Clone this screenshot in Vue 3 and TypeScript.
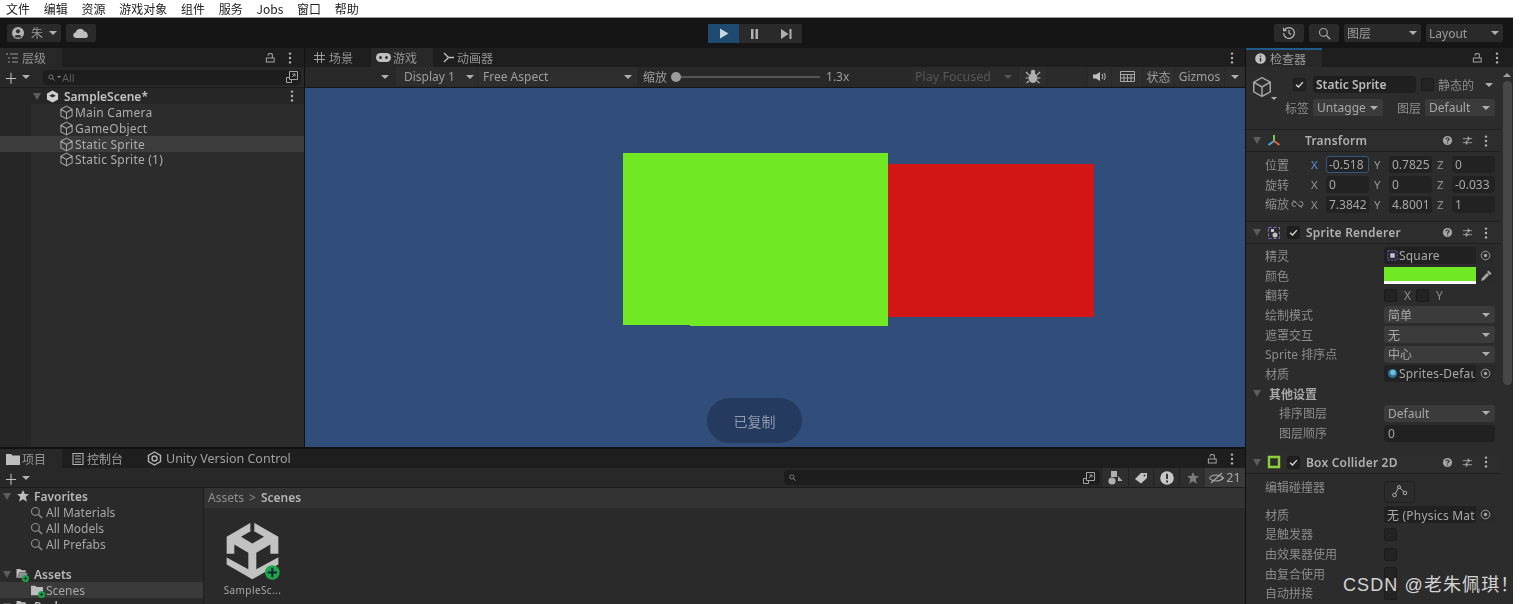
<script setup lang="ts">
const menus = ['文件', '编辑', '资源', '游戏对象', '组件', '服务', 'Jobs', '窗口', '帮助']
const hierarchy = ['Main Camera', 'GameObject', 'Static Sprite', 'Static Sprite (1)']
const transform = [
  { label: '位置', x: '-0.518', y: '0.7825', z: '0', focus: true },
  { label: '旋转', x: '0', y: '0', z: '-0.033', focus: false },
  { label: '缩放', x: '7.3842', y: '4.8001', z: '1', focus: false, link: true },
]
const rendererDrops = [
  { label: '绘制模式', value: '简单' },
  { label: '遮罩交互', value: '无' },
  { label: 'Sprite 排序点', value: '中心' },
]
const colliderChecks = ['是触发器', '由效果器使用', '由复合使用', '自动拼接']
const favorites = ['All Materials', 'All Models', 'All Prefabs']
</script>

<template>
  <div class="page">
    <svg class="defs" aria-hidden="true">
      <symbol id="cube" viewBox="0 0 16 16">
        <path d="M8 1.2 14 4.5V11.5L8 14.8 2 11.5V4.5ZM2 4.5 8 8 14 4.5M8 8V14.8" fill="none" stroke="currentColor" stroke-width="1.1" stroke-linejoin="round" />
      </symbol>
      <symbol id="kebab" viewBox="0 0 4 12">
        <circle cx="2" cy="1.6" r="1.2" fill="currentColor" /><circle cx="2" cy="6" r="1.2" fill="currentColor" /><circle cx="2" cy="10.4" r="1.2" fill="currentColor" />
      </symbol>
      <symbol id="lock" viewBox="0 0 12 12">
        <path d="M1.5 6.5H10V11H1.5ZM3.5 4V2.8C3.5 1.4 8 1.4 8 2.8V6" fill="none" stroke="currentColor" stroke-width="1.1" />
      </symbol>
      <symbol id="help" viewBox="0 0 12 12">
        <circle cx="6" cy="6" r="5" fill="currentColor" />
        <path d="M4.3 4.6C4.4 2.8 7.8 2.9 7.7 4.7 7.7 5.9 6 5.8 6 7.1M6 8.2V9.4" fill="none" stroke="#2c2c2c" stroke-width="1.3" />
      </symbol>
      <symbol id="sliders" viewBox="0 0 12 12">
        <path d="M1 4H11M1 8.4H11" stroke="currentColor" stroke-width="1" /><path d="M7 2V6M5 6.4V10.4" stroke="currentColor" stroke-width="1.8" />
      </symbol>
      <symbol id="target" viewBox="0 0 12 12">
        <circle cx="6" cy="6" r="4.7" fill="none" stroke="currentColor" stroke-width="1" /><circle cx="6" cy="6" r="1.8" fill="currentColor" />
      </symbol>
      <symbol id="check" viewBox="0 0 12 12">
        <path d="M2.3 6.3 4.9 8.8 9.7 3.4" fill="none" stroke="#d8d8d8" stroke-width="1.5" />
      </symbol>
      <symbol id="mag" viewBox="0 0 12 12">
        <circle cx="5" cy="5" r="3.6" fill="none" stroke="currentColor" stroke-width="1.1" /><path d="M7.6 7.6 11.3 11.3" stroke="currentColor" stroke-width="1.4" />
      </symbol>
      <symbol id="folder" viewBox="0 0 16 14">
        <path d="M1 2H6L7.5 3.6H15V13H1Z" fill="currentColor" />
      </symbol>
      <symbol id="folder-open" viewBox="0 0 13 12">
        <path d="M.5 1H4.500L6 2.500H10.500V5H3.500L1.500 11H.5Z" fill="#bdbdbd" /><path d="M3.500 5.500H12.500L10.500 11H2Z" fill="#8f8f8f" />
      </symbol>
      <symbol id="add-dot" viewBox="0 0 8 8">
        <circle cx="4" cy="4" r="4" fill="#1da64a" /><path d="M4 1.800V6.200M1.800 4H6.200" stroke="#123" stroke-width="1" />
      </symbol>
      <symbol id="expand" viewBox="0 0 14 14">
        <path d="M4.5 1.5H12.5V9.5H4.5ZM1.5 7.5H4.5M1.5 7.5V12.5H6.5V9.5M7 7 10 4M7.6 4H10V6.4" fill="none" stroke="currentColor" stroke-width="1" />
      </symbol>
    </svg>

    <div class="window">
      <nav class="menu">
        <span v-for="m in menus" :key="m">{{ m }}</span>
      </nav>

      <header class="toolbar">
        <div class="tb-left">
          <div class="tbtn account">
            <svg class="i14" viewBox="0 0 14 14"><circle cx="7" cy="7" r="6" fill="#b4b4b4" /><circle cx="7" cy="5.3" r="2.1" fill="#333" /><path d="M3.2 10.6C4.4 8.4 9.6 8.4 10.8 10.6 9.3 12.2 4.7 12.2 3.2 10.6Z" fill="#333" /></svg>
            <span>朱</span><i class="arr" />
          </div>
          <div class="tbtn cloud">
            <svg width="16" height="10" viewBox="0 0 16 10"><path d="M3.5 10C-.5 10-.8 5 2.6 4.6 3.4.2 9.8-.9 11.2 3.5 15 3.3 16.5 10 12.5 10Z" fill="#c0c0c0" /></svg>
          </div>
        </div>
        <div class="play-group">
          <div class="pbtn on"><svg width="10" height="11" viewBox="0 0 10 11"><path d="M1 .5 9.5 5.5 1 10.5Z" fill="#c8d4de" /></svg></div>
          <div class="pbtn"><svg width="9" height="10" viewBox="0 0 9 10"><path d="M1 0H3.5V10H1ZM5.5 0H8V10H5.500Z" fill="#b0b0b0" /></svg></div>
          <div class="pbtn"><svg width="11" height="10" viewBox="0 0 11 10"><path d="M0 0 7.5 5 0 10ZM8.500 0H10.500V10H8.500Z" fill="#b0b0b0" /></svg></div>
        </div>
        <div class="tb-right">
          <div class="tbtn sq"><svg class="i14" viewBox="0 0 14 14"><path d="M2.400 4.200A5.400 5.400 0 1 1 1.600 7M1.600 1.700V4.600H4.500M7 3.700V7.200L9.200 8.600" fill="none" stroke="#b4b4b4" stroke-width="1.200" /></svg></div>
          <div class="tbtn sq"><svg class="i13 c-mid"><use href="#mag" /></svg></div>
          <div class="tbtn drop"><span>图层</span><i class="arr" /></div>
          <div class="tbtn drop"><span>Layout</span><i class="arr" /></div>
        </div>
      </header>

      <main class="main">
        <div class="left">
          <div class="top-row">
            <section class="hierarchy">
              <div class="tabs">
                <div class="tab active first">
                  <svg width="12" height="10" viewBox="0 0 12 10"><path d="M0 1H2M4 1H12M2 5H4M6 5H12M2 9H4M6 9H12" stroke="#9a9a9a" stroke-width="1" fill="none" /></svg>
                  <span>层级</span>
                </div>
                <div class="spacer" />
                <svg class="i11 c-mid"><use href="#lock" /></svg>
                <svg class="kebab"><use href="#kebab" /></svg>
              </div>
              <div class="subbar">
                <div class="plus">＋</div><i class="arr" />
                <div class="search h-search">
                  <svg class="i7 c-mid"><use href="#mag" /></svg><i class="arr tiny" />
                  <span class="dim">All</span>
                  <div class="spacer" />
                  <svg class="i14 c-mid"><use href="#expand" /></svg>
                </div>
              </div>
              <div class="h-scene">
                <i class="arr gray" />
                <svg class="i13" viewBox="0 0 14 14"><path d="M7 .5 13 3.8V10.200L7 13.500 1 10.200V3.800Z" fill="#cfcfcf" /><path d="M7 4.200 10.500 6.200 7 8.200 3.500 6.200ZM6.400 8.800V13.500M7.600 8.800V13.500" fill="#2b2b2b" /></svg>
                <b>SampleScene*</b>
                <div class="spacer" />
                <svg class="kebab"><use href="#kebab" /></svg>
              </div>
              <div class="h-list">
                <div v-for="(h, i) in hierarchy" :key="h" class="h-row" :class="{ sel: i === 2 }">
                  <svg class="i15 c-mid"><use href="#cube" /></svg><span>{{ h }}</span>
                </div>
              </div>
            </section>

            <section class="game">
              <div class="tabs">
                <div class="tab scene">
                  <svg width="11" height="11" viewBox="0 0 11 11"><path d="M3.500 0V11M7.500 0V11M0 3.500H11M0 7.500H11" stroke="#a0a0a0" stroke-width="1" /></svg>
                  <span>场景</span>
                </div>
                <div class="tab active gametab">
                  <svg width="15" height="9" viewBox="0 0 15 9"><rect width="15" height="9" rx="4.500" fill="#c0c0c0" /><circle cx="4.500" cy="4.500" r="1.500" fill="#333" /><circle cx="10.500" cy="4.500" r="1.500" fill="#333" /></svg>
                  <span>游戏</span>
                </div>
                <div class="tab anim">
                  <svg width="12" height="11" viewBox="0 0 12 11"><path d="M1 1 5.500 5.500 1 10M5.500 5.500H11" fill="none" stroke="#c0c0c0" stroke-width="1.300" /></svg>
                  <span>动画器</span>
                </div>
                <div class="spacer" />
                <svg class="kebab game-kebab"><use href="#kebab" /></svg>
              </div>
              <div class="g-bar">
                <div class="cell c-first"><i class="arr" /></div>
                <div class="cell c-display"><span>Display 1</span><i class="arr" /></div>
                <div class="cell c-aspect"><span>Free Aspect</span><i class="arr" /></div>
                <div class="cell c-zoom">
                  <span>缩放</span>
                  <div class="slider"><div class="knob" /><div class="rail" /></div>
                  <span>1.3x</span>
                </div>
                <div class="cell c-focus"><span class="faint">Play Focused</span><i class="arr faint-arr" /></div>
                <div class="cell c-bug">
                  <svg width="16" height="15" viewBox="0 0 16 15"><ellipse cx="8" cy="9" rx="4.500" ry="5" fill="#b0b0b0" /><circle cx="8" cy="3" r="2.200" fill="#b0b0b0" /><path d="M1 3 4 6M15 3 12 6M.5 9H3.500M15.500 9H12.500M1.500 14 4 12M14.500 14 12 12" stroke="#b0b0b0" stroke-width="1.200" /></svg>
                </div>
                <div class="cell c-blank" />
                <div class="cell c-sound"><svg width="14" height="9" viewBox="0 0 14 9"><path d="M0 2.500H3L7 0V9L3 6.500H0Z" fill="#c0c0c0" /><path d="M9 2C10 3.500 10 5.500 9 7M11 1C12.500 3 12.500 6 11 8" fill="none" stroke="#c0c0c0" /></svg></div>
                <div class="cell c-grid"><svg width="15" height="11" viewBox="0 0 15 11"><path d="M.5.5H14.500V10.500H.5ZM.5 3.500H14.500M.5 7H14.500M4 3.500V10.500M7.500 3.500V10.500M11 3.500V10.500" fill="none" stroke="#a8a8a8" /></svg></div>
                <div class="cell c-stat"><span>状态</span></div>
                <div class="cell c-giz"><span>Gizmos</span></div>
                <div class="cell c-gizarr"><i class="arr" /></div>
              </div>
              <div class="viewport">
                <div class="sprite red" />
                <div class="sprite green" />
                <div class="sprite green-foot" />
                <div class="toast">已复制</div>
              </div>
            </section>
          </div>

          <section class="project">
            <div class="tabs">
              <div class="tab active first proj">
                <svg class="folder-i c-light"><use href="#folder" /></svg><span>项目</span>
              </div>
              <div class="tab console">
                <svg width="12" height="12" viewBox="0 0 12 12"><path d="M1 .5H11V11.500H1ZM3 3H9M3 6H9M3 9H9" fill="none" stroke="#b4b4b4" stroke-width="1.100" /></svg>
                <span>控制台</span>
              </div>
              <div class="tab uvc">
                <svg width="15" height="15" viewBox="0 0 15 15"><path d="M7.500 1 13.500 4.300V10.700L7.500 14 1.500 10.700V4.300Z" fill="none" stroke="#b4b4b4" stroke-width="1.400" /><circle cx="7.500" cy="7.500" r="2.500" fill="none" stroke="#b4b4b4" stroke-width="1.400" /></svg>
                <span>Unity Version Control</span>
              </div>
              <div class="spacer" />
              <svg class="i11 c-mid"><use href="#lock" /></svg>
              <svg class="kebab game-kebab"><use href="#kebab" /></svg>
            </div>
            <div class="subbar p-bar">
              <div class="plus">＋</div><i class="arr" />
              <div class="spacer" />
              <div class="search p-search">
                <svg class="i7 c-mid"><use href="#mag" /></svg>
                <div class="spacer" />
                <svg class="i14 c-mid"><use href="#expand" /></svg>
              </div>
              <div class="p-tool t27">
                <svg width="15" height="14" viewBox="0 0 15 14"><path d="M3 0H9V6H3Z" fill="#b0b0b0" /><circle cx="4" cy="10" r="3.600" fill="#b0b0b0" /><path d="M10 5 14.500 10H10Z" fill="#b0b0b0" /></svg>
              </div>
              <div class="p-tool t25">
                <svg width="14" height="12" viewBox="0 0 14 12"><path d="M1 7 7 1H13V6L7 11.500Z" fill="#c4c4c4" /><circle cx="10.500" cy="3.500" r="1" fill="#333" /></svg>
              </div>
              <div class="p-tool t26">
                <svg width="14" height="14" viewBox="0 0 14 14"><circle cx="7" cy="7" r="6.800" fill="#c8c8c8" /><path d="M7 2.800V8M7 9.600V11.400" stroke="#333" stroke-width="1.900" /></svg>
              </div>
              <div class="p-tool t26">
                <svg width="12" height="12" viewBox="0 0 12 12"><path d="M6 0 7.800 4H12L8.700 7 10 11.800 6 9.200 2 11.800 3.300 7 0 4H4.200Z" fill="#7a7a7a" /></svg>
              </div>
              <div class="p-hidden">
                <svg width="15" height="12" viewBox="0 0 15 12"><path d="M.5 6C3.500 2 10.500 2 14.500 6 10.500 10 3.500 10 .5 6ZM2 11 13 1" fill="none" stroke="#a8a8a8" stroke-width="1.100" /></svg>
                <span>21</span>
              </div>
            </div>
            <div class="p-body">
              <aside class="tree">
                <div class="t-row bold">
                  <i class="arr gray" />
                  <svg class="star" viewBox="0 0 12 12"><path d="M6 0 7.800 4H12L8.700 7 10 11.800 6 9.200 2 11.800 3.300 7 0 4H4.200Z" fill="#bdbdbd" /></svg>
                  <span>Favorites</span>
                </div>
                <div v-for="f in favorites" :key="f" class="t-row fav">
                  <svg class="i12 c-dim"><use href="#mag" /></svg><span>{{ f }}</span>
                </div>
                <div class="t-row bold assets">
                  <i class="arr gray" />
                  <span class="fold">
                    <svg class="folder-o"><use href="#folder-open" /></svg>
                    <svg class="dot"><use href="#add-dot" /></svg>
                  </span>
                  <span>Assets</span>
                </div>
                <div class="t-row sub sel">
                  <span class="fold wide-fold">
                    <svg class="folder-s c-light"><use href="#folder" /></svg>
                    <svg class="dot"><use href="#add-dot" /></svg>
                  </span>
                  <span>Scenes</span>
                </div>
                <div class="t-row bold">
                  <i class="arr gray" />
                  <span class="fold"><svg class="folder-o"><use href="#folder-open" /></svg></span>
                  <span>Packages</span>
                </div>
              </aside>
              <div class="browser">
                <div class="crumbs"><span>Assets</span><em>&gt;</em><b>Scenes</b></div>
                <div class="tile">
                  <svg class="logo" viewBox="0 0 225 200">
                    <path d="M112 20 190 65V148L112 192 35 148V65Z" fill="#c2c2c2" />
                    <path d="M106 10H118V47H106ZM112 45 147 65 112 85 78 65ZM58 88 100 113V162L35 127 28 123V116H58ZM166 88 124 113V162L189 127 196 123V116H166Z" fill="#2a2a2a" />
                    <circle cx="172" cy="172" r="22" fill="#1da64a" />
                    <path d="M172 158V186M158 172H186" stroke="#123" stroke-width="6" />
                  </svg>
                  <span>SampleSc...</span>
                </div>
              </div>
            </div>
          </section>
        </div>

        <aside class="inspector">
          <div class="tabs">
            <div class="tab active insp">
              <svg width="11" height="11" viewBox="0 0 12 12"><circle cx="6" cy="6" r="5.800" fill="#c0c0c0" /><path d="M6 2.600V4.200M6 5.400V9.400" stroke="#2a2a2a" stroke-width="1.600" /></svg>
              <span>检查器</span>
            </div>
            <div class="spacer" />
            <svg class="i11 c-mid"><use href="#lock" /></svg>
            <svg class="kebab insp-kebab"><use href="#kebab" /></svg>
          </div>
          <div class="in-wrap">
            <div class="in-body">
              <div class="obj">
                <div class="obj-icon">
                  <svg class="i22 c-mid"><use href="#cube" /></svg>
                  <i class="arr" />
                </div>
                <div class="obj-rows">
                  <div class="obj-row">
                    <div class="chk on"><svg><use href="#check" /></svg></div>
                    <div class="name"><b>Static Sprite</b></div>
                    <div class="chk" />
                    <span class="static">静态的</span>
                    <i class="arr" />
                  </div>
                  <div class="obj-row second">
                    <span class="lbl-tag">标签</span>
                    <div class="dropdown tagdrop"><span class="clip">Untagged</span><i class="arr" /></div>
                    <span class="lbl-layer">图层</span>
                    <div class="dropdown layerdrop"><span>Default</span><i class="arr" /></div>
                  </div>
                </div>
              </div>

              <div class="comp-head">
                <i class="arr gray" />
                <svg class="comp-icon" viewBox="0 0 14 14"><path d="M7 1V7" stroke="#7ec850" stroke-width="2" /><path d="M7 7 1.500 11" stroke="#4aa8e0" stroke-width="2" /><path d="M7 7 12.500 11" stroke="#e0603a" stroke-width="2" /></svg>
                <b class="c-title t-transform">Transform</b>
                <div class="spacer" />
                <svg class="i11 c-mid"><use href="#help" /></svg>
                <svg class="i11 c-mid mid-icon"><use href="#sliders" /></svg>
                <svg class="kebab"><use href="#kebab" /></svg>
              </div>
              <div class="t-body">
                <div v-for="r in transform" :key="r.label" class="t-line">
                  <span class="t-label">{{ r.label }}<svg v-if="r.link" class="link" viewBox="0 0 14 10"><path d="M5 2.500H3.500A2.500 2.500 0 0 0 3.500 7.500H5M9 2.500H10.500A2.500 2.500 0 0 1 10.500 7.500H9M2 1 12 9" fill="none" stroke="#a0a0a0" /></svg></span>
                  <span class="axis" :class="{ blue: r.focus }">X</span>
                  <div class="num" :class="{ focus: r.focus }">{{ r.x }}</div>
                  <span class="axis">Y</span>
                  <div class="num">{{ r.y }}</div>
                  <span class="axis">Z</span>
                  <div class="num">{{ r.z }}</div>
                </div>
              </div>

              <div class="comp-head">
                <i class="arr gray" />
                <svg class="comp-icon" viewBox="0 0 14 14"><path d="M1.500 1.500H12.500V12.500H1.500Z" fill="none" stroke="#8a6fc8" stroke-width="1" stroke-dasharray="3 2" /><circle cx="8" cy="9" r="2.500" fill="#c0c0c0" /><path d="M4 3H7V6H4Z" fill="#c0c0c0" /></svg>
                <div class="chk on tiny-chk"><svg><use href="#check" /></svg></div>
                <b class="c-title">Sprite Renderer</b>
                <div class="spacer" />
                <svg class="i11 c-mid"><use href="#help" /></svg>
                <svg class="i11 c-mid mid-icon"><use href="#sliders" /></svg>
                <svg class="kebab"><use href="#kebab" /></svg>
              </div>
              <div class="c-body renderer">
                <div class="row">
                  <span>精灵</span>
                  <div class="field obj-field">
                    <svg class="i11" viewBox="0 0 12 12"><path d="M1 1H11V11H1Z" fill="none" stroke="#8a6fc8" stroke-dasharray="2 1.500" /><rect x="3.500" y="3.500" width="5" height="5" fill="#c0c0d8" /></svg>
                    <span class="clip">Square</span>
                    <div class="pick"><svg class="i11 c-mid"><use href="#target" /></svg></div>
                  </div>
                </div>
                <div class="row">
                  <span>颜色</span>
                  <div class="color">
                    <div class="swatch"><div class="swatch-c" /><div class="swatch-a" /></div>
                    <div class="pick"><svg width="12" height="12" viewBox="0 0 12 12"><path d="M1 11 2 8 7 3 9 5 4 10ZM7 2 8.500.5 11.500 3.500 10 5Z" fill="#a8a8a8" /></svg></div>
                  </div>
                </div>
                <div class="row">
                  <span>翻转</span>
                  <div class="flip">
                    <div class="chk" /><span class="fl">X</span>
                    <div class="chk" /><span class="fl">Y</span>
                  </div>
                </div>
                <div v-for="d in rendererDrops" :key="d.label" class="row">
                  <span>{{ d.label }}</span>
                  <div class="dropdown wide"><span>{{ d.value }}</span><i class="arr" /></div>
                </div>
                <div class="row">
                  <span>材质</span>
                  <div class="field obj-field">
                    <svg class="i11" viewBox="0 0 12 12"><circle cx="6" cy="6" r="5" fill="#2d6f8e" /><circle cx="6.500" cy="5" r="3" fill="#6cc0dc" /></svg>
                    <span class="clip">Sprites-Default</span>
                    <div class="pick"><svg class="i11 c-mid"><use href="#target" /></svg></div>
                  </div>
                </div>
                <div class="row group"><i class="arr gray" /><b>其他设置</b></div>
                <div class="row indent">
                  <span>排序图层</span>
                  <div class="dropdown wide"><span>Default</span><i class="arr" /></div>
                </div>
                <div class="row indent">
                  <span>图层顺序</span>
                  <div class="field wide-num">0</div>
                </div>
              </div>

              <div class="comp-head">
                <i class="arr gray" />
                <svg class="comp-icon" viewBox="0 0 14 14"><path d="M2 2H12V12H2Z" fill="none" stroke="#8bd03a" stroke-width="2.400" /></svg>
                <div class="chk on tiny-chk"><svg><use href="#check" /></svg></div>
                <b class="c-title">Box Collider 2D</b>
                <div class="spacer" />
                <svg class="i11 c-mid"><use href="#help" /></svg>
                <svg class="i11 c-mid mid-icon"><use href="#sliders" /></svg>
                <svg class="kebab"><use href="#kebab" /></svg>
              </div>
              <div class="c-body">
                <div class="row edit">
                  <span class="edit-label">编辑碰撞器</span>
                  <div class="edit-wrap">
                    <div class="edit-btn">
                      <svg width="16" height="13" viewBox="0 0 16 13"><path d="M2.500 10 7 2 13 8" fill="none" stroke="#b0b0b0" /><circle cx="2.500" cy="10" r="1.800" fill="#292929" stroke="#b0b0b0" /><circle cx="7" cy="2" r="1.500" fill="#292929" stroke="#b0b0b0" /><circle cx="13" cy="8" r="1.800" fill="#292929" stroke="#b0b0b0" /></svg>
                    </div>
                  </div>
                </div>
                <div class="row">
                  <span>材质</span>
                  <div class="field obj-field">
                    <span class="clip">无 (Physics Material 2D)</span>
                    <div class="pick"><svg class="i11 c-mid"><use href="#target" /></svg></div>
                  </div>
                </div>
                <div v-for="c in colliderChecks" :key="c" class="row">
                  <span>{{ c }}</span>
                  <div class="flip"><div class="chk" /></div>
                </div>
              </div>
            </div>
            <div class="scrollbar">
              <i class="arr up" />
              <div class="thumb" />
            </div>
          </div>
        </aside>
      </main>
    </div>
    <div class="watermark">CSDN @老朱佩琪！</div>
  </div>
</template>

<style>
html, body { margin: 0; padding: 0; background: #fff; overflow: hidden; }
</style>

<style scoped>
.page {
  position: relative;
  width: 1523px;
  height: 604px;
  overflow: hidden;
  background: #fff;
  font-family: "Noto Sans", "Noto Sans CJK SC", sans-serif;
  font-size: 12px;
  color: #a8a8a8;
}
.defs { display: none; }
.window {
  width: 1513px;
  height: 604px;
  display: flex;
  flex-direction: column;
  filter: blur(0.4px);
}
.spacer { flex: 1; }
svg { display: block; flex: none; }
.i7 { width: 7px; height: 7px; }
.i11 { width: 11px; height: 11px; }
.i12 { width: 13px; height: 13px; }
.i13 { width: 13px; height: 13px; }
.i14 { width: 14px; height: 14px; }
.i15 { width: 15px; height: 15px; }
.i22 { width: 22px; height: 22px; }
.c-mid { color: #a4a4a4; }
.c-light { color: #bdbdbd; }
.c-dim { color: #8c8c8c; }
.kebab { width: 4px; height: 12px; color: #b4b4b4; margin: 0 12px 0 12px; }
.game-kebab { margin-right: 11px; }
.insp-kebab { margin-right: 14px; }
.arr {
  display: block;
  flex: none;
  width: 0;
  height: 0;
  border-left: 4px solid transparent;
  border-right: 4px solid transparent;
  border-top: 4px solid #b0b0b0;
}
.arr.gray { border-top: 7px solid #5c5c5c; }
.arr.tiny { border-width: 2px 2px 0; margin-left: 1px; border-top-color: #8e8e8e; }

.menu {
  height: 17px;
  flex: none;
  background: #fff;
  border-bottom: 1px solid #999;
  display: flex;
  align-items: center;
  gap: 13.75px;
  padding-left: 6px;
  color: #222;
  font-size: 12px;
  font-family: "Noto Sans CJK SC", "Noto Sans", sans-serif;
}

.toolbar {
  height: 30px;
  flex: none;
  background: #151515;
  display: flex;
  align-items: flex-start;
  justify-content: space-between;
  padding: 6px 10px 0 7px;
  box-sizing: border-box;
  position: relative;
}
.tb-left, .tb-right { display: flex; gap: 5px; }
.tbtn {
  height: 18px;
  background: #2a2a2a;
  border-radius: 2px;
  display: flex;
  align-items: center;
  justify-content: center;
  color: #9c9c9c;
}
.account { width: 54px; gap: 6px; }
.cloud { width: 30px; }
.sq { width: 30px; }
.drop { width: 77px; justify-content: space-between; padding: 0 4px 0 3px; box-sizing: border-box; }
.play-group {
  position: absolute;
  left: 708px;
  top: 6px;
  display: flex;
  background: #2a2a2a;
}
.pbtn { width: 31px; height: 19px; display: flex; align-items: center; justify-content: center; background: #2a2a2a; }
.pbtn:last-child { width: 32px; }
.pbtn.on { background: #1f4a70; }

.main { flex: 1; display: flex; min-height: 0; background: #111; }
.left { width: 1245px; flex: none; display: flex; flex-direction: column; gap: 2px; }
.top-row { height: 399px; flex: none; display: flex; gap: 1px; }

.tabs {
  height: 19px;
  flex: none;
  display: flex;
  align-items: center;
  background: #1e1e1e;
}
.tab {
  height: 19px;
  display: flex;
  align-items: center;
  gap: 4px;
  box-sizing: border-box;
  color: #949494;
}
.tab.active { background: #282828; }
.first { width: 62px; padding-left: 6px; }
.scene { width: 66px; padding-left: 9px; }
.gametab { width: 62px; padding-left: 5px; gap: 2px; }
.anim { width: 70px; padding-left: 10px; gap: 2px; }
.proj { gap: 1px; padding-left: 5px; }
.console { padding-left: 10px; width: 85px; gap: 3px; color: #a0a0a0; }
.uvc { gap: 4px; font-size: 12.5px; color: #a0a0a0; }
.folder-i { width: 16px; height: 14px; }
.folder-o { width: 12px; height: 11px; }
.folder-s { width: 14px; height: 12px; }

.subbar {
  height: 20px;
  flex: none;
  background: #282828;
  display: flex;
  align-items: center;
  padding-left: 4px;
  gap: 3px;
  border-bottom: 1px solid #1c1c1c;
}
.plus { font-size: 14px; color: #c0c0c0; width: 14px; line-height: 14px; font-family: "Noto Sans CJK SC", sans-serif; margin-right: 1px; }
.search {
  height: 15px;
  background: #1d1d1d;
  border-radius: 4px;
  display: flex;
  align-items: center;
  padding: 0 2px 0 5px;
  box-sizing: border-box;
}
.h-search { width: 258px; margin-left: 10px; font-size: 11px; gap: 1px; }
.dim { color: #5c5c5c; margin-left: 0; }

.hierarchy { width: 304px; flex: none; display: flex; flex-direction: column; background: #2c2c2c; }
.h-scene {
  height: 16px;
  background: #262626;
  display: flex;
  align-items: center;
  padding-left: 33px;
  color: #c2c2c2;
  font-size: 12px;
  gap: 5px;
  flex: none;
}
.h-scene b { font-weight: 600; }
.h-scene .kebab { margin-right: 10px; }
.h-list {
  flex: 1;
  padding-top: 1px;
  background: linear-gradient(to right, #262626 31px, #2c2c2c 31px);
}
.h-row {
  height: 15.7px;
  display: flex;
  align-items: center;
  gap: 1px;
  padding-left: 59px;
  color: #adadad;
  font-size: 12px;
  letter-spacing: 0.22px;
}
.h-row.sel { background: #3c3c3c; }

.game { flex: 1; display: flex; flex-direction: column; min-width: 0; }
.g-bar {
  height: 20px;
  flex: none;
  display: flex;
  align-items: flex-start;
  background: #282828;
  border-bottom: 1px solid #161616;
  gap: 1px;
}
.cell {
  height: 19px;
  display: flex;
  align-items: center;
  justify-content: space-between;
  box-sizing: border-box;
  background: #2e2e2e;
  flex: none;
  color: #9e9e9e;
}
.c-first { width: 90px; background: #282828; padding-right: 6px; justify-content: flex-end; }
.c-display { width: 81px; padding: 0 3px 0 8px; }
.c-aspect { width: 159px; padding: 0 5px; }
.c-zoom { width: 273px; background: #282828; justify-content: flex-start; padding-left: 5px; }
.slider { width: 149px; margin: 0 6px 0 4px; display: flex; align-items: center; }
.knob { width: 10px; height: 10px; border-radius: 50%; background: #9c9c9c; flex: none; }
.rail { flex: 1; height: 2px; background: #555; }
.c-focus { width: 106px; padding: 0 6px 0 3px; background: #2b2b2b; font-size: 12.5px; }
.faint { color: #565656; }
.faint-arr { border-top-color: #565656; }
.c-bug { width: 27px; justify-content: center; }
.c-blank { width: 40px; background: #2b2b2b; }
.c-sound { width: 23px; justify-content: center; }
.c-grid { width: 30px; justify-content: center; }
.c-stat { width: 31px; justify-content: center; }
.c-giz { width: 49px; justify-content: center; }
.c-gizarr { width: 20px; justify-content: center; }

.viewport { flex: 1; background: #314d79; position: relative; overflow: hidden; }
.sprite { position: absolute; }
.red { left: 583px; top: 76px; width: 206px; height: 153px; background: #d21616; }
.green { left: 318px; top: 65px; width: 265px; height: 172px; background: #70e824; }
.green-foot { left: 385px; top: 237px; width: 198px; height: 1px; background: #70e824; }
.toast {
  position: absolute;
  left: 402px;
  top: 310px;
  width: 95px;
  height: 45px;
  border-radius: 23px;
  background: #243a5f;
  color: #8f9bb0;
  font-size: 14px;
  display: flex;
  align-items: center;
  justify-content: center;
}

.project { flex: 1; display: flex; flex-direction: column; background: #2a2a2a; min-height: 0; }
.p-bar { box-sizing: border-box; gap: 3px; border-bottom: 1px solid #1d1d1d; }
.p-search { width: 316px; margin-right: 1px; padding-right: 4px; }
.p-tool { height: 19px; display: flex; align-items: center; justify-content: center; background: #2e2e2e; margin-left: -3px; border-left: 1px solid #222; box-sizing: border-box; flex: none; }
.t27 { width: 27px; }
.t25 { width: 25px; }
.t26 { width: 26px; }
.p-hidden { width: 40px; height: 19px; background: #3a3a3a; display: flex; align-items: center; justify-content: center; gap: 2px; margin-left: -3px; color: #aaa; font-size: 12.5px; flex: none; }
.p-body { flex: 1; display: flex; min-height: 0; overflow: hidden; }
.tree { width: 203px; flex: none; border-right: 1px solid #1e1e1e; }
.t-row { height: 16px; display: flex; align-items: center; color: #a6a6a6; font-size: 12px; padding-left: 3px; flex-wrap: nowrap; }
.t-row.bold { font-weight: 600; color: #b8b8b8; gap: 5px; }
.t-row.fav { padding-left: 30px; gap: 3px; }
.star { width: 12px; height: 12px; margin-left: 1px; }
.t-row.assets { margin-top: 14px; }
.t-row.sub { padding-left: 30px; }
.t-row.sel { background: #3a3a3a; }
.fold { position: relative; width: 13px; height: 12px; display: block; flex: none; }
.fold.wide-fold { width: 16px; }
.dot {
  position: absolute;
  right: 0;
  bottom: -2px;
  width: 7px;
  height: 7px;
}
.wide-fold .dot { right: 1px; }
.browser { flex: 1; display: flex; flex-direction: column; }
.crumbs {
  height: 20px;
  flex: none;
  box-sizing: border-box;
  padding: 0 0 2px 4px;
  background: #333333;
  display: flex;
  align-items: center;
  gap: 5px;
  color: #8e8e8e;
}
.crumbs b { color: #b4b4b4; font-weight: 600; }
.crumbs em { font-style: normal; color: #8e8e8e; }
.tile { width: 75px; margin: 7px 0 0 11px; display: flex; flex-direction: column; align-items: center; }
.logo { width: 75px; height: 67px; }
.tile span { font-size: 10px; color: #a8a8a8; letter-spacing: 0.4px; margin-top: 1px; }

.inspector { flex: 1; margin-left: 1px; display: flex; flex-direction: column; min-width: 0; background: #2c2c2c; }
.insp { width: 76px; gap: 4px; padding-left: 9px; border-top: 2px solid #205a86; color: #9e9e9e; }
.in-wrap { flex: 1; display: flex; min-height: 0; overflow: hidden; }
.in-body { flex: 1; min-width: 0; }
.scrollbar { width: 12px; flex: none; display: flex; flex-direction: column; align-items: center; padding-top: 6px; background: #2c2c2c; }
.arr.up { border-top: none; border-bottom: 4px solid #a0a0a0; }
.thumb { width: 9px; height: 304px; border-radius: 5px; background: #474747; margin-top: 4px; }

.obj { height: 63px; box-sizing: border-box; display: flex; border-bottom: 1px solid #1f1f1f; padding-left: 5px; }
.obj-icon { width: 42px; flex: none; padding-top: 9px; }
.obj-icon .arr { margin: -1px 0 0 20px; border-width: 3px 3px 0; }
.obj-rows { flex: 1; padding-top: 9px; }
.obj-row { display: flex; align-items: center; height: 17px; }
.chk { width: 13px; height: 13px; border-radius: 2px; background: #232323; border: 1px solid #1c1c1c; flex: none; display: flex; align-items: center; justify-content: center; box-sizing: border-box; }
.chk svg { width: 11px; height: 11px; }
.name { width: 103px; height: 17px; background: #1f1f1f; margin: 0 5px 0 7px; border-radius: 3px; color: #bcbcbc; display: flex; align-items: center; padding-left: 3px; box-sizing: border-box; }
.name b { font-weight: 600; }
.static { margin: 0 11px 0 4px; color: #8c8c8c; }
.obj-row.second { margin-top: 6px; }
.lbl-tag { width: 28px; margin-left: -8px; color: #8e8e8e; }
.lbl-layer { margin-left: 14px; margin-right: 4px; color: #8e8e8e; }
.dropdown {
  height: 17px;
  background: #3b3b3b;
  border-radius: 3px;
  display: flex;
  align-items: center;
  justify-content: space-between;
  padding: 0 5px 0 4px;
  box-sizing: border-box;
  color: #a8a8a8;
  flex: none;
}
.tagdrop { width: 70px; }
.layerdrop { width: 70px; }
.clip { overflow: hidden; white-space: nowrap; flex: 1; min-width: 0; }
.tagdrop .clip { flex: none; width: 49px; }

.comp-head {
  height: 22px;
  box-sizing: border-box;
  display: flex;
  align-items: center;
  padding-left: 7px;
  border-bottom: 1px solid #1f1f1f;
  background: #2d2d2d;
}
.comp-icon { width: 14px; height: 14px; margin-left: 6px; }
.tiny-chk { margin-left: 6px; background: #1f1f1f; }
.c-title { font-weight: 600; color: #b0b0b0; margin-left: 6px; font-size: 12px; letter-spacing: 0.2px; }
.t-transform { margin-left: 24px; }
.mid-icon { margin-left: 9px; }
.comp-head .kebab { margin: 0 13px 0 11px; }

.t-body { height: 70px; box-sizing: border-box; padding-top: 3px; border-bottom: 1px solid #1f1f1f; }
.t-line { display: flex; align-items: center; height: 19.7px; padding-left: 19px; }
.t-label { width: 46px; flex: none; color: #8e8e8e; display: flex; align-items: center; gap: 2px; white-space: nowrap; overflow: hidden; }
.t-label .link { width: 13px; height: 10px; }
.axis { width: 15px; flex: none; color: #949494; font-size: 11.5px; }
.axis.blue { color: #5d8fd6; }
.num {
  width: 43px;
  height: 17px;
  flex: none;
  background: #222;
  border-radius: 3px;
  margin-right: 5px;
  box-sizing: border-box;
  padding-left: 3px;
  line-height: 17px;
  color: #a8a8a8;
  overflow: hidden;
  white-space: nowrap;
}
.num.focus { border: 1px solid #2f5a85; line-height: 15px; padding-left: 2px; }

.c-body { padding-top: 3px; }
.c-body.renderer { padding-top: 2px; padding-bottom: 9px; }
.row { height: 19.7px; display: flex; align-items: center; justify-content: space-between; padding: 0 6px 0 19px; color: #8c8c8c; }
.row.indent { padding-left: 33px; }
.row.group { justify-content: flex-start; padding-left: 7px; gap: 8px; }
.row.group b { font-weight: 600; color: #a8a8a8; }
.field {
  width: 111px;
  height: 17px;
  background: #212121;
  border-radius: 3px;
  display: flex;
  align-items: center;
  box-sizing: border-box;
  flex: none;
  color: #a8a8a8;
}
.obj-field { padding-left: 3px; gap: 1px; letter-spacing: 0.2px; }
.pick { width: 19px; height: 17px; display: flex; align-items: center; justify-content: center; background: #2a2a2a; flex: none; border-radius: 0 3px 3px 0; }
.wide-num { padding-left: 4px; }
.wide { width: 111px; }
.color { width: 111px; height: 17px; display: flex; flex: none; }
.swatch { flex: 1; display: flex; flex-direction: column; }
.swatch-c { height: 14px; background: #70e824; }
.swatch-a { height: 3px; background: #fff; }
.flip { width: 111px; display: flex; align-items: center; flex: none; }
.fl { width: 17px; text-align: center; color: #8c8c8c; margin-left: 2px; }
.row.edit { height: 24px; margin-top: 4px; align-items: flex-start; }
.edit-label { margin-top: -3px; }
.edit-wrap { width: 111px; flex: none; }
.edit-btn { width: 31px; height: 22px; border: 1px solid #1f1f1f; border-radius: 3px; background: #2b2b2b; box-sizing: border-box; display: flex; align-items: center; justify-content: center; }

.watermark {
  position: absolute;
  left: 1343px;
  top: 573px;
  font-family: "Liberation Sans", "Noto Sans CJK SC", sans-serif;
  font-size: 18px;
  line-height: 24px;
  color: #d4d4d4;
  letter-spacing: 1.1px;
  white-space: nowrap;
}
</style>
